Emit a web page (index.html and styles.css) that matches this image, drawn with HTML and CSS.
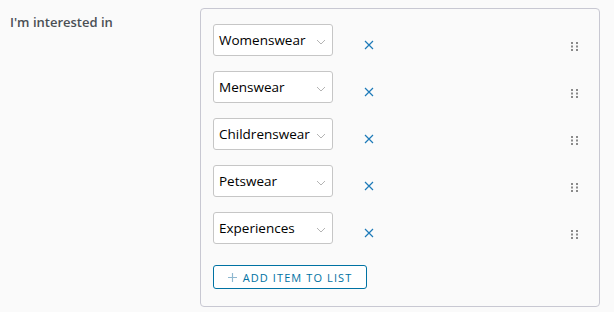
FILE: index.html
```html
<!DOCTYPE html>
<html lang="en">
<head>
    <meta charset="UTF-8">
    <title>Interests</title>
    <link rel="stylesheet" href="styles.css">
</head>
<body>
    <div class="field">
        <label class="field-label">I'm interested in</label>

        <div class="list-panel">
            <div class="list-row">
                <div class="select-box">
                    <span>Womenswear</span>
                    <svg class="chevron" viewBox="0 0 10 6"><path d="M1 1 L5 5 L9 1"/></svg>
                </div>
                <svg class="remove" viewBox="0 0 10 10"><path d="M1 1 L9 9 M9 1 L1 9"/></svg>
                <svg class="handle" viewBox="0 0 7 9"><rect x="0" y="0" width="2" height="2"/><rect x="5" y="0" width="2" height="2"/><rect x="0" y="3.5" width="2" height="2"/><rect x="5" y="3.5" width="2" height="2"/><rect x="0" y="7" width="2" height="2"/><rect x="5" y="7" width="2" height="2"/></svg>
            </div>
            <div class="list-row">
                <div class="select-box">
                    <span>Menswear</span>
                    <svg class="chevron" viewBox="0 0 10 6"><path d="M1 1 L5 5 L9 1"/></svg>
                </div>
                <svg class="remove" viewBox="0 0 10 10"><path d="M1 1 L9 9 M9 1 L1 9"/></svg>
                <svg class="handle" viewBox="0 0 7 9"><rect x="0" y="0" width="2" height="2"/><rect x="5" y="0" width="2" height="2"/><rect x="0" y="3.5" width="2" height="2"/><rect x="5" y="3.5" width="2" height="2"/><rect x="0" y="7" width="2" height="2"/><rect x="5" y="7" width="2" height="2"/></svg>
            </div>
            <div class="list-row">
                <div class="select-box">
                    <span>Childrenswear</span>
                    <svg class="chevron" viewBox="0 0 10 6"><path d="M1 1 L5 5 L9 1"/></svg>
                </div>
                <svg class="remove" viewBox="0 0 10 10"><path d="M1 1 L9 9 M9 1 L1 9"/></svg>
                <svg class="handle" viewBox="0 0 7 9"><rect x="0" y="0" width="2" height="2"/><rect x="5" y="0" width="2" height="2"/><rect x="0" y="3.5" width="2" height="2"/><rect x="5" y="3.5" width="2" height="2"/><rect x="0" y="7" width="2" height="2"/><rect x="5" y="7" width="2" height="2"/></svg>
            </div>
            <div class="list-row">
                <div class="select-box">
                    <span>Petswear</span>
                    <svg class="chevron" viewBox="0 0 10 6"><path d="M1 1 L5 5 L9 1"/></svg>
                </div>
                <svg class="remove" viewBox="0 0 10 10"><path d="M1 1 L9 9 M9 1 L1 9"/></svg>
                <svg class="handle" viewBox="0 0 7 9"><rect x="0" y="0" width="2" height="2"/><rect x="5" y="0" width="2" height="2"/><rect x="0" y="3.5" width="2" height="2"/><rect x="5" y="3.5" width="2" height="2"/><rect x="0" y="7" width="2" height="2"/><rect x="5" y="7" width="2" height="2"/></svg>
            </div>
            <div class="list-row">
                <div class="select-box">
                    <span>Experiences</span>
                    <svg class="chevron" viewBox="0 0 10 6"><path d="M1 1 L5 5 L9 1"/></svg>
                </div>
                <svg class="remove" viewBox="0 0 10 10"><path d="M1 1 L9 9 M9 1 L1 9"/></svg>
                <svg class="handle" viewBox="0 0 7 9"><rect x="0" y="0" width="2" height="2"/><rect x="5" y="0" width="2" height="2"/><rect x="0" y="3.5" width="2" height="2"/><rect x="5" y="3.5" width="2" height="2"/><rect x="0" y="7" width="2" height="2"/><rect x="5" y="7" width="2" height="2"/></svg>
            </div>

            <button type="button" class="btn-add">
                <svg class="plus" viewBox="0 0 10 10"><path d="M5 0 V10 M0 5 H10"/></svg>
                ADD ITEM TO LIST
            </button>
        </div>
    </div>
</body>
</html>
```

FILE: styles.css
```css
* {
    margin: 0;
    padding: 0;
    box-sizing: border-box;
}

body {
    background: #fafafa;
    font-family: 'Open Sans', 'Liberation Sans', sans-serif;
    color: #000;
}

.field {
    display: flex;
    align-items: flex-start;
}

.field-label {
    width: 200px;
    padding: 13px 0 0 10px;
    font-size: 13px;
    font-weight: 600;
    color: #4a4f55;
}

.list-panel {
    width: 400px;
    margin-top: 8px;
    border: 1px solid #c8c8d2;
    border-radius: 4px;
    padding: 15px 21px 17px 12px;
    display: flex;
    flex-direction: column;
    gap: 15px;
}

.list-row {
    display: flex;
    align-items: center;
    height: 32px;
}

.select-box {
    width: 120px;
    height: 32px;
    border: 1px solid #c6c6c6;
    border-radius: 3px;
    background: #fff;
    display: flex;
    align-items: center;
    justify-content: space-between;
    padding: 0 6px 0 5px;
    font-size: 13.5px;
}

.chevron {
    width: 10px;
    height: 6px;
    margin-top: 3px;
    fill: none;
    stroke: #b4b4b4;
    stroke-width: 1;
}

.remove {
    width: 10px;
    height: 10px;
    margin: 10px 0 0 31px;
    fill: none;
    stroke: #1d7ab8;
    stroke-width: 1.2;
}

.handle {
    width: 7px;
    height: 9px;
    margin: 12px 0 0 auto;
    fill: #8a8a8a;
}

.btn-add {
    align-self: flex-start;
    margin-top: 6px;
    width: 154px;
    height: 24px;
    border: 1px solid #0072a3;
    border-radius: 3px;
    background: #fff;
    color: #0072a3;
    font-family: 'Open Sans', 'Liberation Sans', sans-serif;
    font-size: 11px;
    font-weight: 500;
    letter-spacing: 1.1px;
    display: flex;
    align-items: center;
    justify-content: center;
    gap: 6px;
    cursor: pointer;
}

.plus {
    width: 9px;
    height: 9px;
    fill: none;
    stroke: #8fb8d0;
    stroke-width: 1.3;
}
```
